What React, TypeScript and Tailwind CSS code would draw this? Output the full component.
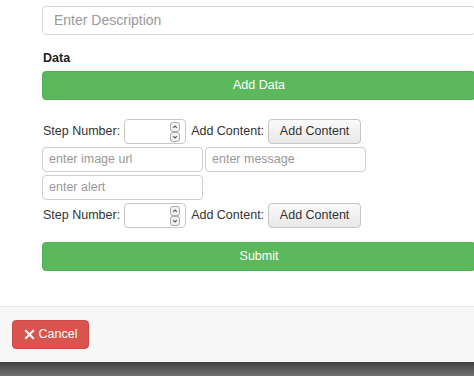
function Spinner() {
  return (
    <div className="flex flex-col">
      <span className="flex h-[10px] w-[10px] items-center justify-center rounded-[3px] border border-[#aaa] bg-[#f3f3f3]">
        <svg viewBox="0 0 8 8" className="h-[6px] w-[6px]" fill="none" stroke="#555" strokeWidth="1.4">
          <path d="M1.5 5.2 4 2.7 6.5 5.2" />
        </svg>
      </span>
      <span className="flex h-[10px] w-[10px] items-center justify-center rounded-[3px] border border-[#aaa] bg-[#f3f3f3]">
        <svg viewBox="0 0 8 8" className="h-[6px] w-[6px]" fill="none" stroke="#555" strokeWidth="1.4">
          <path d="M1.5 2.8 4 5.3 6.5 2.8" />
        </svg>
      </span>
    </div>
  );
}

function StepRow() {
  return (
    <div className="flex h-[25px] items-center text-[12.5px] text-[#333]">
      <span className="ml-px">Step Number:</span>
      <div className="ml-[4px] flex h-[25px] w-[62px] items-center justify-end rounded-[4px] border border-[#c8c8c8] bg-white pr-[5px]">
        <Spinner />
      </div>
      <span className="ml-[5px]">Add Content:</span>
      <button
        type="button"
        className="ml-[4px] h-[25px] w-[93px] rounded-[4px] border border-[#c4c4c4] bg-gradient-to-b from-[#fafafa] to-[#e8e8e8] text-[12.5px] text-[#333]"
      >
        Add Content
      </button>
    </div>
  );
}

function SmallInput({ placeholder }: { placeholder: string }) {
  return (
    <div className="flex h-[25px] w-[161px] items-center rounded-[4px] border border-[#cfcfcf] bg-white pl-[6px] text-[12.5px] text-[#999]">
      {placeholder}
    </div>
  );
}

export default function App() {
  return (
    <div className="flex h-[376px] w-[474px] flex-col overflow-hidden bg-white font-['Liberation_Sans',Arial,sans-serif]">
      <div className="w-[476px] shrink-0 pl-[42px] pt-[6px]">
        <div className="flex h-[29px] items-center rounded-[4px] border border-[#d6d6d6] pl-[11px] text-[14px] text-[#999]">
          Enter Description
        </div>
        <div className="mt-[16px] pl-px text-[12.5px] font-bold leading-[14px] text-[#222]">Data</div>
        <button
          type="button"
          className="mt-[6px] h-[29px] w-full rounded-[4px] border border-[#4fae4f] bg-[#5cb85c] text-[12.5px] text-white"
        >
          Add Data
        </button>
        <div className="mt-[19px] flex flex-col gap-[3px]">
          <StepRow />
          <div className="flex gap-[2px]">
            <SmallInput placeholder="enter image url" />
            <SmallInput placeholder="enter message" />
          </div>
          <SmallInput placeholder="enter alert" />
          <StepRow />
        </div>
        <button
          type="button"
          className="mt-[14px] h-[29px] w-full rounded-[4px] border border-[#4fae4f] bg-[#5cb85c] text-[12.5px] text-white"
        >
          Submit
        </button>
      </div>
      <div className="mt-[35px] flex h-[56px] shrink-0 items-center border-t border-[#e5e5e5] bg-[#f7f7f7] pl-[12px]">
        <button
          type="button"
          className="flex h-[29px] w-[77px] items-center justify-center gap-[4px] rounded-[4px] border border-[#cf4a45] bg-[#d9534f] text-[12.5px] text-white"
        >
          <svg viewBox="0 0 12 12" className="h-[11px] w-[11px]" fill="white">
            <path d="M2.2 0.6 6 4.4 9.8 0.6 11.4 2.2 7.6 6 11.4 9.8 9.8 11.4 6 7.6 2.2 11.4 0.6 9.8 4.4 6 0.6 2.2Z" />
          </svg>
          Cancel
        </button>
      </div>
      <div className="flex-1 bg-gradient-to-b from-[#3f3f3f] via-[#5a5a5a] to-[#707070]" />
    </div>
  );
}
